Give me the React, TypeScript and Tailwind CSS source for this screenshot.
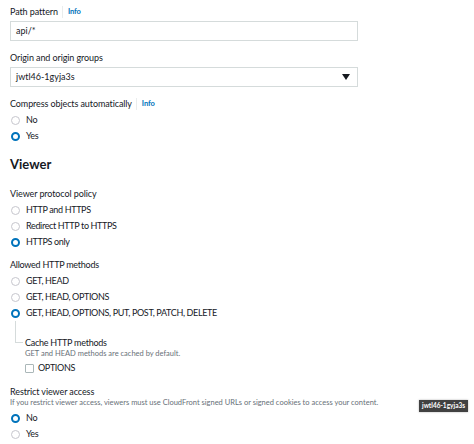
import React from 'react';

function Radio({ label, checked }: { label: string; checked?: boolean }) {
  return (
    <div className="flex items-center h-4 gap-[6px]">
      {checked ? (
        <span className="w-[9px] h-[9px] rounded-full border-[2.5px] border-[#0073bb] bg-white" />
      ) : (
        <span className="w-[9px] h-[9px] rounded-full border border-[#c6c6cd] bg-white" />
      )}
      <span className="text-[9px] text-[#16191f] tracking-[-0.35px]">{label}</span>
    </div>
  );
}

function Info() {
  return (
    <span className="ml-[4px] pl-[5px] border-l border-[#eaeded] text-[7.5px] font-bold text-[#0073bb]">Info</span>
  );
}

function Label({ children }: { children: React.ReactNode }) {
  return <div className="flex items-center text-[9px] text-[#16191f] leading-[12px] tracking-[-0.1px]">{children}</div>;
}

export default function App() {
  return (
    <div className="relative w-[474px] h-[444px] bg-white font-['Lato','Liberation_Sans',sans-serif] px-[10px] pt-[6px] overflow-hidden">
      <Label>
        Path pattern <Info />
      </Label>
      <div className="mt-[3px] w-[348px] h-[20px] border border-[#d5dbdb] flex items-center px-[5px] text-[9px] text-[#16191f]">
        api/*
      </div>

      <div className="mt-[11px]">
        <Label>Origin and origin groups</Label>
      </div>
      <div className="mt-[3px] w-[348px] h-[20px] border border-[#d5dbdb] flex items-center justify-between px-[5px] text-[9px] text-[#16191f]">
        <span>jwtl46-1gyja3s</span>
        <svg width="8" height="6" viewBox="0 0 8 6" className="mr-[2px]">
          <path d="M0 0h8L4 6z" fill="#16191f" />
        </svg>
      </div>

      <div className="mt-[11px]">
        <Label>
          Compress objects automatically <Info />
        </Label>
      </div>
      <div className="mt-[2px] pl-[1px]">
        <Radio label="No" />
        <Radio label="Yes" checked />
      </div>

      <div className="mt-[12px] text-[13px] font-bold text-[#16191f] leading-[16px]">Viewer</div>

      <div className="mt-[16px]">
        <Label>Viewer protocol policy</Label>
      </div>
      <div className="mt-[2px] pl-[1px]">
        <Radio label="HTTP and HTTPS" />
        <Radio label="Redirect HTTP to HTTPS" />
        <Radio label="HTTPS only" checked />
      </div>

      <div className="mt-[9px]">
        <Label>
          <span className="tracking-[-0.25px]">Allowed HTTP methods</span>
        </Label>
      </div>
      <div className="mt-[2px] pl-[1px]">
        <Radio label="GET, HEAD" />
        <Radio label="GET, HEAD, OPTIONS" />
        <Radio label="GET, HEAD, OPTIONS, PUT, POST, PATCH, DELETE" checked />
      </div>

      <div className="flex">
        <div className="ml-[5px] w-[8px] h-[22px] border-l border-b border-[#d5dbdb]" />
        <div className="ml-[2px] pt-[16px]">
          <div className="text-[9px] text-[#16191f] leading-[12px] tracking-[-0.25px]">Cache HTTP methods</div>
          <div className="text-[7.5px] text-[#687078] leading-[10px]">GET and HEAD methods are cached by default.</div>
          <div className="mt-[3px] flex items-center gap-[4px] h-[12px]">
            <span className="w-[9px] h-[9px] rounded-[1px] border border-[#aab7b8] bg-white" />
            <span className="text-[9px] text-[#16191f] tracking-[-0.35px]">OPTIONS</span>
          </div>
        </div>
      </div>

      <div className="mt-[12px]">
        <Label>Restrict viewer access</Label>
      </div>
      <div className="text-[7.5px] text-[#687078] leading-[10px]">
        If you restrict viewer access, viewers must use CloudFront signed URLs or signed cookies to access your content.
      </div>
      <div className="mt-[2px] pl-[1px]">
        <Radio label="No" checked />
        <Radio label="Yes" />
      </div>

      <div className="absolute left-[419px] top-[400px] h-[12px] px-[3px] bg-[#414141] text-white text-[6.5px] font-bold leading-[12px] shadow-[0_0_2px_rgba(0,0,0,0.3)]">
        jwtl46-1gyja3s
      </div>
    </div>
  );
}
